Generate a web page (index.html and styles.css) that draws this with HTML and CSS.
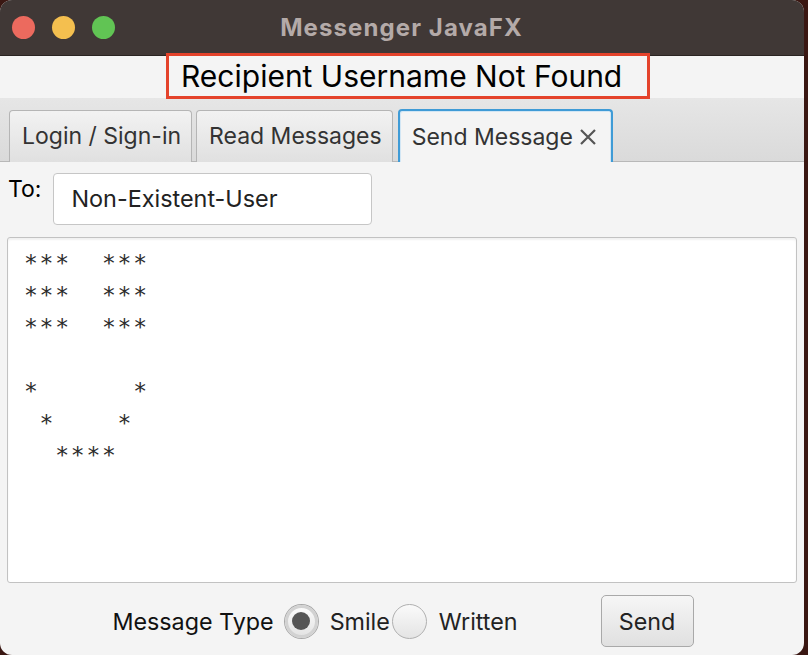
FILE: index.html
```html
<!DOCTYPE html>
<html lang="en">
<head>
<meta charset="UTF-8" />
<title>Messenger JavaFX</title>
<link rel="stylesheet" href="styles.css">
</head>
<body>

<div class="window">
  <!-- title bar -->
  <div class="titlebar">
    <div class="lights">
      <span class="light red"></span>
      <span class="light yellow"></span>
      <span class="light green"></span>
    </div>
    <div class="title">Messenger JavaFX</div>
  </div>

  <!-- status message -->
  <div class="status">
    <div class="status-label">Recipient Username Not Found</div>
  </div>

  <!-- tabs -->
  <div class="tabs">
    <div class="tab">Login / Sign-in</div>
    <div class="tab">Read Messages</div>
    <div class="tab selected">Send Message
      <svg class="close" width="18" height="18" viewBox="0 0 18 18">
        <path d="M2 2 L16 16 M16 2 L2 16" stroke="#555" stroke-width="2.2" fill="none" />
      </svg>
    </div>
  </div>

  <div class="content">
    <div class="to-row">
      <span class="to-label">To:</span>
      <div class="field">Non-Existent-User</div>
    </div>

    <pre class="message">***  ***
***  ***
***  ***

*      *
 *    *
  ****</pre>

    <div class="bottom">
      <span class="type-label">Message Type</span>
      <span class="radio checked"><span class="dot"></span></span>
      <span class="radio-text">Smile</span>
      <span class="radio"></span>
      <span class="radio-text">Written</span>
      <button class="send">Send</button>
    </div>
  </div>
</div>

</body>
</html>
```

FILE: styles.css
```css
body {
  margin: 0;
  background: #3a1712;
  font-family: Inter, "Noto Sans", sans-serif;
  overflow: hidden;
}

.window {
  width: 804px;
  height: 655px;
  background: #f4f4f4;
  border-radius: 12px;
  overflow: hidden;
}

/* title bar */
.titlebar {
  height: 56px;
  background: #403836;
  display: flex;
  align-items: center;
  border-bottom: 1px solid #2a2422;
  box-sizing: border-box;
}
.lights {
  display: flex;
  gap: 17px;
  padding-left: 12px;
}
.light {
  width: 23px;
  height: 23px;
  border-radius: 50%;
}
.red { background: #ec6a5e; }
.yellow { background: #f4bf4f; }
.green { background: #61c454; }
.title {
  flex: 1;
  text-align: center;
  margin-right: 116px;
  color: #b4aaa8;
  font-weight: bold;
  font-size: 24px;
  letter-spacing: 1.1px;
}

/* status */
.status {
  height: 42px;
  display: flex;
  justify-content: center;
  padding-left: 12px;
}
.status-label {
  margin-top: -3px;
  width: 484px;
  height: 46px;
  box-sizing: border-box;
  border: 3px solid #e4432b;
  background: #f4f4f4;
  font-size: 30px;
  color: #000;
  padding-left: 12px;
  line-height: 40px;
  position: relative;
}

/* tabs */
.tabs {
  height: 64px;
  background: linear-gradient(#e6e6e6, #dadada);
  border-bottom: 1px solid #b8b8b8;
  box-sizing: border-box;
  display: flex;
  align-items: flex-end;
  padding-left: 9px;
  gap: 4px;
}
.tab {
  height: 52px;
  box-sizing: border-box;
  border: 1px solid #b5b5b5;
  border-bottom: none;
  border-radius: 4px 4px 0 0;
  background: linear-gradient(#f2f2f2, #e0e0e0);
  font-size: 23px;
  color: #333;
  padding: 0 10px 0 12px;
  line-height: 50px;
  margin-bottom: -1px;
}
.tab.selected {
  background: #f4f4f4;
  border: 2px solid #3f9bd6;
  border-bottom: none;
  box-shadow: inset 1px 1px 0 #d2e6f4, inset -1px 0 0 #d2e6f4;
  height: 53px;
  padding: 0 14px 0 12px;
  margin-left: 1px;
  display: flex;
  align-items: center;
  gap: 6px;
}
.close {
  margin-top: 1px;
}

/* content */
.content {
  padding: 11px 7px 0 7px;
}
.to-row {
  display: flex;
  gap: 12px;
}
.to-label {
  font-size: 23px;
  color: #000;
  padding-top: 2px;
  margin-left: 1px;
}
.field {
  width: 319px;
  height: 52px;
  box-sizing: border-box;
  background: #fff;
  border: 1px solid #c6c6c6;
  border-radius: 4px;
  font-size: 23.4px;
  color: #222;
  padding-left: 17px;
  line-height: 50px;
}

.message {
  margin: 12px 0 0 0;
  height: 346px;
  box-sizing: border-box;
  background: #fff;
  border: 1px solid #c2c2c2;
  border-radius: 3px;
  box-shadow: inset 0 2px 2px rgba(0, 0, 0, 0.06);
  font-family: "DejaVu Sans Mono", monospace;
  font-size: 23px;
  letter-spacing: 1.75px;
  line-height: 32px;
  color: #2c2c2c;
  padding: 9px 0 0 16px;
}

.bottom {
  display: flex;
  align-items: center;
  justify-content: center;
  height: 76px;
  padding-left: 2px;
}
.type-label {
  font-size: 23.3px;
  color: #111;
  margin-right: 11px;
}
.radio {
  width: 35px;
  height: 35px;
  box-sizing: border-box;
  border-radius: 50%;
  border: 1px solid #b0b0b0;
  background: linear-gradient(#fafafa, #e4e4e4);
  display: flex;
  align-items: center;
  justify-content: center;
}
.radio.checked {
  width: 33px;
  height: 33px;
  border: 3px solid #d2d2d2;
  box-shadow: 0 0 0 1px #a8a8a8;
}
.dot {
  width: 18px;
  height: 18px;
  border-radius: 50%;
  background: #555;
}
.radio-text {
  font-size: 23.3px;
  color: #222;
  margin-left: 12px;
}
.radio-text + .radio {
  margin-left: 2px;
}
.send {
  margin-left: 83px;
  width: 93px;
  height: 52px;
  border: 1px solid #a9a9a9;
  border-radius: 5px;
  background: linear-gradient(#f6f6f6, #e0e0e0);
  font-family: Inter, "Noto Sans", sans-serif;
  font-size: 23.3px;
  color: #222;
}
```
